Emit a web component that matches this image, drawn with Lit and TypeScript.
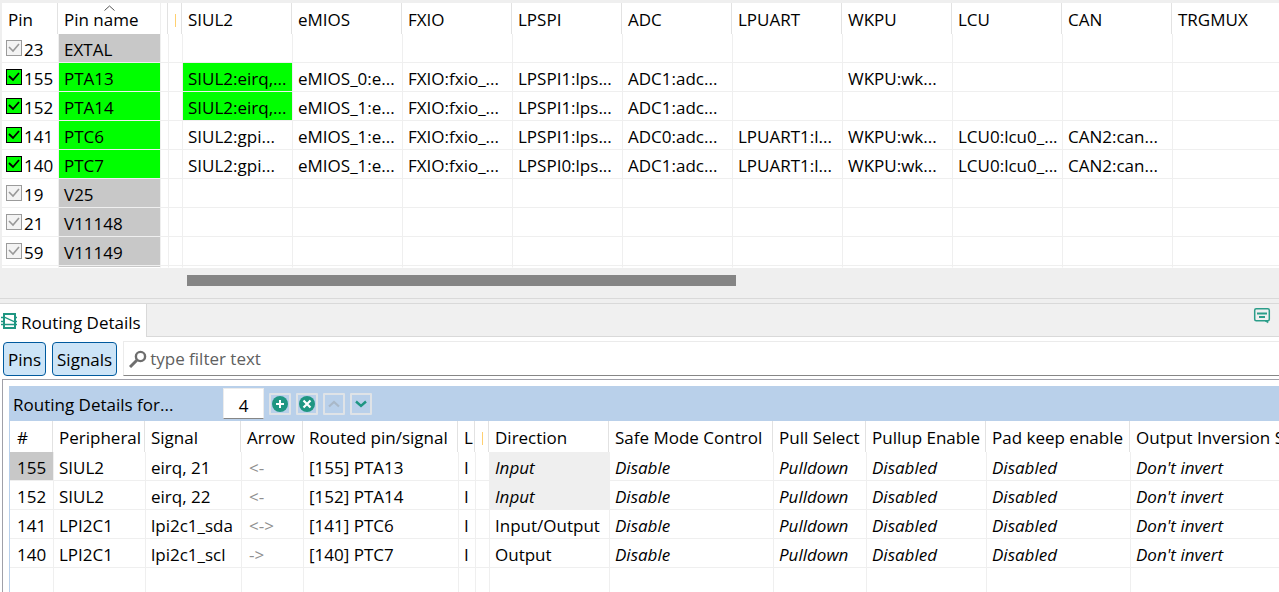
import { LitElement, html, css, svg, nothing } from "lit";
import { customElement } from "lit/decorators.js";
import { classMap } from "lit/directives/class-map.js";

interface Pin {
  num: string;
  name: string;
  routed: boolean;
  cells: string[];
  active?: boolean;
}

const PERIPHERALS = ["SIUL2", "eMIOS", "FXIO", "LPSPI", "ADC", "LPUART", "WKPU", "LCU", "CAN", "TRGMUX"];

const PINS: Pin[] = [
  { num: "23", name: "EXTAL", routed: false, cells: [] },
  { num: "155", name: "PTA13", routed: true, active: true, cells: ["SIUL2:eirq,...", "eMIOS_0:e...", "FXIO:fxio_...", "LPSPI1:lps...", "ADC1:adc...", "", "WKPU:wk..."] },
  { num: "152", name: "PTA14", routed: true, active: true, cells: ["SIUL2:eirq,...", "eMIOS_1:e...", "FXIO:fxio_...", "LPSPI1:lps...", "ADC1:adc..."] },
  { num: "141", name: "PTC6", routed: true, cells: ["SIUL2:gpi...", "eMIOS_1:e...", "FXIO:fxio_...", "LPSPI1:lps...", "ADC0:adc...", "LPUART1:l...", "WKPU:wk...", "LCU0:lcu0_...", "CAN2:can..."] },
  { num: "140", name: "PTC7", routed: true, cells: ["SIUL2:gpi...", "eMIOS_1:e...", "FXIO:fxio_...", "LPSPI0:lps...", "ADC1:adc...", "LPUART1:l...", "WKPU:wk...", "LCU0:lcu0_...", "CAN2:can..."] },
  { num: "19", name: "V25", routed: false, cells: [] },
  { num: "21", name: "V11148", routed: false, cells: [] },
  { num: "59", name: "V11149", routed: false, cells: [] },
];

const DETAIL_COLUMNS: { label: string; width: number | null; mark?: boolean }[] = [
  { label: "#", width: 43 },
  { label: "Peripheral", width: 92 },
  { label: "Signal", width: 96 },
  { label: "Arrow", width: 62 },
  { label: "Routed pin/signal", width: 155 },
  { label: "L", width: 17 },
  { label: "", width: 14, mark: true },
  { label: "Direction", width: 120 },
  { label: "Safe Mode Control", width: 164 },
  { label: "Pull Select", width: 93 },
  { label: "Pullup Enable", width: 120 },
  { label: "Pad keep enable", width: 144 },
  { label: "Output Inversion S", width: null },
];

const DEFAULTS = ["Disable", "Pulldown", "Disabled", "Disabled", "Don't invert"];

const ROUTES = [
  { num: "155", periph: "SIUL2", signal: "eirq, 21", arrow: "<-", pin: "[155] PTA13", dir: "Input", fixed: true },
  { num: "152", periph: "SIUL2", signal: "eirq, 22", arrow: "<-", pin: "[152] PTA14", dir: "Input", fixed: true },
  { num: "141", periph: "LPI2C1", signal: "lpi2c1_sda", arrow: "<->", pin: "[141] PTC6", dir: "Input/Output", fixed: false },
  { num: "140", periph: "LPI2C1", signal: "lpi2c1_scl", arrow: "->", pin: "[140] PTC7", dir: "Output", fixed: false },
];

const shared = css`
  :host {
    display: block;
    font-family: "Open Sans", "Noto Sans", sans-serif;
    font-size: 17px;
    color: #000;
  }
  * {
    box-sizing: border-box;
  }
  table {
    width: 100%;
    table-layout: fixed;
    border-collapse: separate;
    border-spacing: 0;
    background: #fff;
  }
  th,
  td {
    padding: 0 0 0 6px;
    text-align: left;
    font-weight: 400;
    white-space: nowrap;
    overflow: hidden;
  }
  th {
    height: 31px;
    line-height: 28px;
    padding-top: 3px;
    border-right: 1px solid #e2e2e2;
  }
  td {
    height: 29px;
    line-height: 24px;
    padding-top: 4px;
    padding-left: 5px;
    border-left: 1px solid #efefef;
    border-bottom: 1px solid #efefef;
  }
  th:last-child {
    border-right: 0;
  }
  td:first-child {
    border-left: 0;
  }
  .mark {
    display: block;
    width: 1px;
    height: 13px;
    margin-left: 1px;
    background: #ffd070;
  }
`;

@customElement("pin-table")
export class PinTable extends LitElement {
  static styles = [
    shared,
    css`
      .frame {
        padding: 3px 0 0 2px;
        background: #efefef;
      }
      .num {
        width: 56px;
      }
      .name {
        width: 102px;
      }
      .gap {
        width: 8px;
      }
      .slot {
        width: 14px;
      }
      .periph {
        width: 110px;
      }
      .sorted {
        position: relative;
        border-right: 0;
      }
      .caret {
        position: absolute;
        top: 2px;
        left: 46px;
        width: 11px;
        height: 6px;
      }
      .gaphead {
        padding: 0;
        border-left: 1px solid #efefef;
      }
      td.pin {
        padding-left: 4px;
      }
      .pin label {
        display: flex;
        align-items: center;
        gap: 2px;
      }
      .pin input {
        appearance: none;
        flex: none;
        width: 16px;
        height: 16px;
        margin: 0 0 4px;
        border: 1px solid #9b9b9b;
        background: #f3f3f3
          url("data:image/svg+xml,%3Csvg xmlns='http://www.w3.org/2000/svg' viewBox='0 0 14 14'%3E%3Cpath d='M2 6l4 4 6-7' fill='none' stroke='%23999' stroke-width='1.6'/%3E%3C/svg%3E");
      }
      .pin input.routed {
        border-color: #000;
        background: #0f0
          url("data:image/svg+xml,%3Csvg xmlns='http://www.w3.org/2000/svg' viewBox='0 0 14 14'%3E%3Cpath d='M2 6l4 4 6-7' fill='none' stroke='%23000' stroke-width='1.8'/%3E%3C/svg%3E");
      }
      .grey {
        background: #c8c8c8 padding-box;
      }
      .green {
        background: #0f0 padding-box;
      }
      .rest td {
        height: 2px;
        padding: 0;
        border-bottom-color: #fff;
      }
    `,
  ];

  render() {
    return html`
      <div class="frame">
        <table>
          <colgroup>
            <col class="num" /><col class="name" /><col class="gap" /><col class="slot" />
            ${PERIPHERALS.map((_, i) => html`<col class=${i < PERIPHERALS.length - 1 ? "periph" : "last"} />`)}
          </colgroup>
          <thead>
            <tr>
              <th>Pin</th>
              <th class="sorted">
                Pin name
                <svg class="caret" viewBox="0 0 11 6"><path d="M.5 5.5l5-4.5 5 4.5" fill="none" stroke="#555" /></svg>
              </th>
              <th class="gaphead"></th>
              <th><span class="mark"></span></th>
              ${PERIPHERALS.map((p) => html`<th>${p}</th>`)}
            </tr>
          </thead>
          <tbody>
            ${PINS.map(
              (p) => html`
                <tr>
                  <td class="pin">
                    <label><input type="checkbox" class=${classMap({ routed: p.routed })} checked ?disabled=${!p.routed} />${p.num}</label>
                  </td>
                  <td class=${p.routed ? "green" : "grey"}>${p.name}</td>
                  <td></td>
                  <td></td>
                  ${PERIPHERALS.map((_, i) => html`<td class=${classMap({ green: i === 0 && !!p.active })}>${p.cells[i] ?? nothing}</td>`)}
                </tr>
              `
            )}
            <tr class="rest">
              <td></td>
              <td class="grey"></td>
              <td></td>
              <td></td>
              ${PERIPHERALS.map(() => html`<td></td>`)}
            </tr>
          </tbody>
        </table>
      </div>
    `;
  }
}

const ICONS = {
  add: svg`<circle cx="8" cy="8" r="8" fill="#1f9682"/><path d="M8 4v8M4 8h8" stroke="#fff" stroke-width="2"/>`,
  remove: svg`<circle cx="8" cy="8" r="8" fill="#1f9682"/><path d="M4.5 4.5l7 7M11.5 4.5l-7 7" stroke="#fff" stroke-width="2.2"/>`,
  up: svg`<path d="M3 10.5l5-4.5 5 4.5" fill="none" stroke="#a9b8c8" stroke-width="2.2"/>`,
  down: svg`<path d="M3 5.5l5 4.5 5-4.5" fill="none" stroke="#1f9682" stroke-width="2.4"/>`,
};

@customElement("routing-details")
export class RoutingDetails extends LitElement {
  static styles = [
    shared,
    css`
      :host {
        display: flex;
        flex-direction: column;
        background: #fff;
      }
      .tabs {
        display: flex;
        flex: none;
        height: 34px;
        border-top: 1px solid #d9d9d9;
        background: #f0f0f0;
      }
      .tab {
        display: flex;
        align-items: center;
        gap: 4px;
        margin: 0;
        padding: 4px 5px 0 1px;
        border: 0;
        border-right: 1px solid #d9d9d9;
        background: #fff;
        font: inherit;
        color: inherit;
        white-space: nowrap;
      }
      .tabicon {
        width: 16px;
        height: 18px;
        margin-bottom: 4px;
      }
      .filler {
        flex: 1;
        display: flex;
        justify-content: flex-end;
        align-items: flex-start;
        padding: 3px 8px 0 0;
        border-bottom: 1px solid #d9d9d9;
      }
      .note {
        padding: 0;
        border: 0;
        background: none;
        line-height: 0;
      }
      .tools {
        display: flex;
        flex: none;
        gap: 6px;
        padding: 4px 0 3px 3px;
        height: 42px;
      }
      .toggle {
        height: 34px;
        margin-top: 1px;
        padding: 0 4px;
        border: 1px solid #005a9e;
        border-radius: 4px;
        background: #cce4f7;
        font: inherit;
        color: inherit;
      }
      .search {
        flex: 1;
        display: flex;
        align-items: center;
        gap: 3px;
        padding-left: 5px;
        border: 1px solid #ebebeb;
        border-right: 0;
        border-bottom-color: #868686;
      }
      .search input {
        flex: 1;
        min-width: 0;
        padding: 0;
        border: 0;
        outline: 0;
        background: none;
        font: inherit;
      }
      .search input::placeholder {
        color: #606060;
        opacity: 1;
      }
      .panel {
        flex: 1;
        margin-left: 2px;
        padding: 6px 0 0 6px;
        border-left: 1px solid #a0a0a8;
        border-top: 1px solid #a0a0a8;
      }
      .title {
        display: flex;
        align-items: center;
        height: 35px;
        padding-left: 4px;
        background: #b9d0ea;
      }
      .caption {
        width: 210px;
        padding-top: 2px;
      }
      .count {
        width: 41px;
        height: 31px;
        padding: 3px 0 0;
        border: 1px solid #ececec;
        border-bottom-color: #868686;
        background: #fff;
        font: inherit;
        text-align: center;
        margin-right: 5px;
      }
      .act {
        display: grid;
        place-items: center;
        width: 22px;
        height: 22px;
        margin-right: 5px;
        padding: 0;
        border: 2px solid #dfe3e7;
        border-radius: 1px;
        background: #b9d0ea;
      }
      .act svg {
        width: 16px;
        height: 16px;
      }
      .grid {
        border-left: 1px solid #b9d0ea;
      }
      th:first-child,
      td:first-child {
        padding-left: 7px;
      }
      .current {
        background: #c8c8c8 padding-box;
      }
      .locked {
        background: #efefef;
        border-color: #efefef;
      }
      .default {
        font-style: italic;
      }
      td.arrow {
        padding-left: 7px;
        color: #8f8f8f;
      }
      .tail td {
        border-bottom: 0;
      }
    `,
  ];

  private act(label: string, icon: unknown, disabled = false) {
    return html`<button class="act" aria-label=${label} ?disabled=${disabled}><svg viewBox="0 0 16 16">${icon}</svg></button>`;
  }

  render() {
    return html`
      <div class="tabs">
        <button class="tab" role="tab" aria-selected="true">
          <svg class="tabicon" viewBox="0 0 16 18" fill="none" stroke="#1f9682">
            <rect x="3" y="2" width="11" height="14" stroke-width="2" />
            <path d="M0 5.5h4l9 4h3M0 9.5h3M0 12.5h16M13 5.5h3" stroke-width="1.3" />
          </svg>
          Routing Details
        </button>
        <div class="filler">
          <button class="note" aria-label="Notes">
            <svg width="18" height="18" viewBox="0 0 18 18" fill="none" stroke="#2b9d89">
              <rect x="1.7" y="1.7" width="14.6" height="12" rx="1.5" stroke-width="1.5" />
              <path d="M4 6.5h10M6 10h6" stroke-width="1.8" />
              <path d="M12 14h3v2z" fill="#2b9d89" stroke-width=".5" />
            </svg>
          </button>
        </div>
      </div>
      <div class="tools">
        <button class="toggle" aria-pressed="true">Pins</button>
        <button class="toggle" aria-pressed="true">Signals</button>
        <div class="search">
          <svg width="18" height="18" viewBox="0 0 18 18" fill="none" stroke="#6e6e6e">
            <circle cx="11.5" cy="6.5" r="4.6" stroke-width="2.4" />
            <path d="M7.8 10.3L1 17" stroke-width="3" />
          </svg>
          <input type="text" aria-label="Filter" placeholder="type filter text" />
        </div>
      </div>
      <div class="panel">
        <div class="title">
          <label class="caption" for="count">Routing Details for...</label>
          <input class="count" id="count" type="text" value="4" />
          ${this.act("Add row", ICONS.add)} ${this.act("Remove row", ICONS.remove)}
          ${this.act("Move up", ICONS.up, true)} ${this.act("Move down", ICONS.down)}
        </div>
        <div class="grid">
          <table>
            <colgroup>
              ${DETAIL_COLUMNS.map((c) => html`<col style=${c.width ? `width:${c.width}px` : nothing} />`)}
            </colgroup>
            <thead>
              <tr>
                ${DETAIL_COLUMNS.map((c) => html`<th>${c.mark ? html`<span class="mark"></span>` : c.label}</th>`)}
              </tr>
            </thead>
            <tbody>
              ${ROUTES.map(
                (r, i) => html`
                  <tr>
                    <td class=${classMap({ current: i === 0 })}>${r.num}</td>
                    <td>${r.periph}</td>
                    <td>${r.signal}</td>
                    <td class="arrow">${r.arrow}</td>
                    <td>${r.pin}</td>
                    <td>I</td>
                    <td></td>
                    <td class=${classMap({ locked: r.fixed, default: r.fixed })}>${r.dir}</td>
                    ${DEFAULTS.map((d) => html`<td class="default">${d}</td>`)}
                  </tr>
                `
              )}
              <tr class="tail">
                ${DETAIL_COLUMNS.map(() => html`<td></td>`)}
              </tr>
            </tbody>
          </table>
        </div>
      </div>
    `;
  }
}

@customElement("app-root")
export class AppRoot extends LitElement {
  static styles = css`
    :host {
      display: flex;
      flex-direction: column;
      height: 100vh;
      overflow: hidden;
      background: #efefef;
    }
    .scroll {
      flex: none;
      padding: 7px 0 12px 187px;
      border-bottom: 1px solid #d9d9d9;
      margin-bottom: 4px;
    }
    .thumb {
      width: 549px;
      height: 11px;
      background: #858585;
    }
    pin-table {
      flex: none;
    }
    routing-details {
      flex: 1;
      min-height: 0;
      overflow: hidden;
    }
  `;

  render() {
    return html`
      <pin-table></pin-table>
      <div class="scroll"><div class="thumb"></div></div>
      <routing-details></routing-details>
    `;
  }
}
